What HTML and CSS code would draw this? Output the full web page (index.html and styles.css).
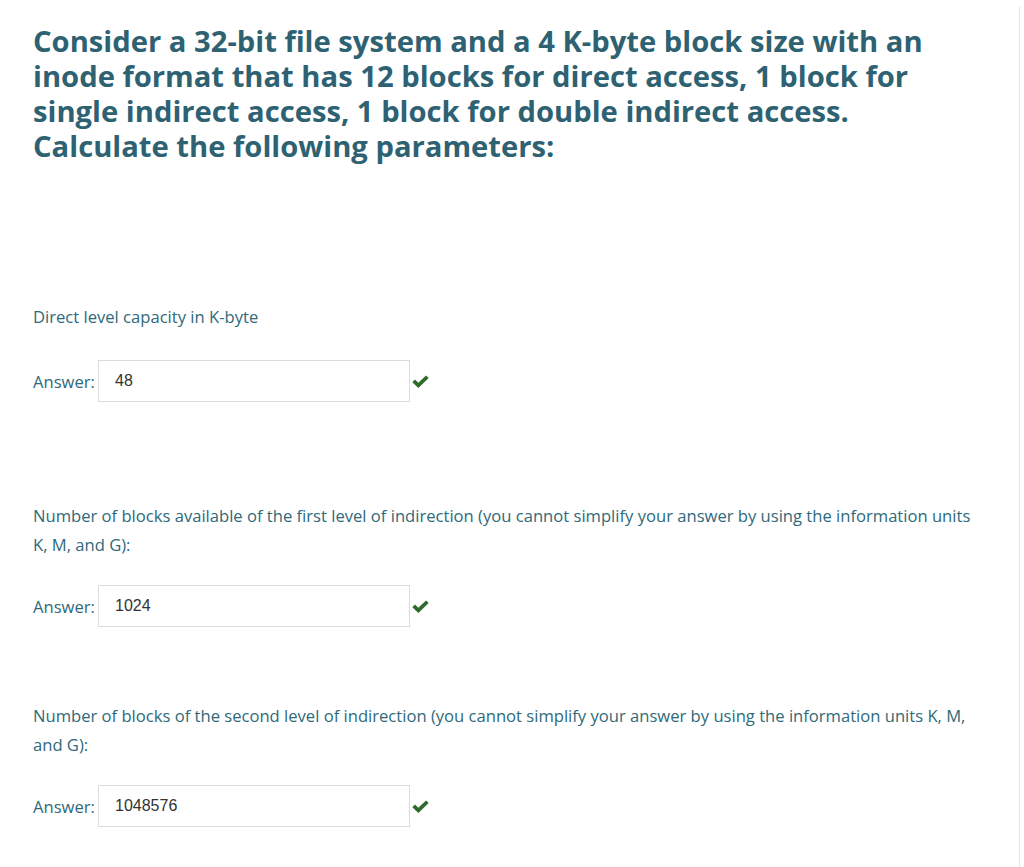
FILE: index.html
```html
<!DOCTYPE html>
<html lang="en">
<head>
    <meta charset="UTF-8">
    <meta name="viewport" content="width=device-width, initial-scale=1.0">
    <title>Question</title>
    <link rel="stylesheet" href="styles.css">
</head>
<body>
    <div class="page">
        <h2 class="qtext">Consider a 32-bit file system and a 4 K-byte block size with an inode format that has 12 blocks for direct access, 1 block for single indirect access, 1 block for double indirect access. Calculate the following parameters:</h2>

        <div class="subq first">
            <p>Direct level capacity in K-byte</p>
            <div class="answer">
                <label>Answer:</label>
                <input type="text" value="48">
                <svg class="tick" viewBox="0 0 16 12" width="17" height="13"><path d="M0.3 6.6 L2.8 4.1 L6 7.2 L13.2 0.3 L15.7 2.8 L6 12 Z" fill="#2d6b2a"/></svg>
            </div>
        </div>

        <div class="subq second">
            <p>Number of blocks available of the first level of indirection (you cannot simplify your answer by using the information units K, M, and G):</p>
            <div class="answer">
                <label>Answer:</label>
                <input type="text" value="1024">
                <svg class="tick" viewBox="0 0 16 12" width="17" height="13"><path d="M0.3 6.6 L2.8 4.1 L6 7.2 L13.2 0.3 L15.7 2.8 L6 12 Z" fill="#2d6b2a"/></svg>
            </div>
        </div>

        <div class="subq third">
            <p>Number of blocks of the second level of indirection (you cannot simplify your answer by using the information units K, M, and G):</p>
            <div class="answer">
                <label>Answer:</label>
                <input type="text" value="1048576">
                <svg class="tick" viewBox="0 0 16 12" width="17" height="13"><path d="M0.3 6.6 L2.8 4.1 L6 7.2 L13.2 0.3 L15.7 2.8 L6 12 Z" fill="#2d6b2a"/></svg>
            </div>
        </div>
    </div>
</body>
</html>
```

FILE: styles.css
```css
*{
  margin: 0;
  padding: 0;
  box-sizing: border-box;
}
body {
  background: #fff;
  font-family: "Open Sans", "Noto Sans", sans-serif;
  color: #2f6a7a;
}
.page {
  width: 1020px;
  min-height: 861px;
  margin-top: 6px;
  padding: 18px 36px 0 33px;
  background: #fff;
  border-right: 1px solid #e6e6e6;
}
.qtext {
  font-size: 29.2px;
  line-height: 35px;
  font-weight: 700;
  color: #2e6272;
  width: 920px;
}
.subq p {
  font-size: 16.6px;
  line-height: 29px;
  margin-bottom: 26px;
}
.subq.first {
  margin-top: 138px;
}
.subq.first p {
  margin-bottom: 29px;
}
.subq.second {
  margin-top: 99px;
}
.subq.third {
  margin-top: 74px;
}
.answer {
  display: flex;
  align-items: center;
  height: 42px;
}
.answer label {
  font-size: 16.6px;
  width: 65px;
}
.answer input {
  width: 312px;
  height: 42px;
  padding: 0 16px;
  border: 1px solid #d9dde0;
  font-family: "Liberation Sans", Arial, sans-serif;
  font-size: 16px;
  color: #333;
  outline: none;
}
.answer .tick {
  margin-left: 2px;
}
```
